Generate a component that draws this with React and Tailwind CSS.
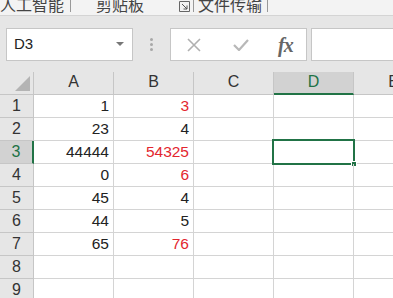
import React from 'react'

const rows = [
  ['1', '1', '3', true],
  ['2', '23', '4', false],
  ['3', '44444', '54325', true],
  ['4', '0', '6', true],
  ['5', '45', '4', false],
  ['6', '44', '5', false],
  ['7', '65', '76', true],
  ['8', '', '', false],
  ['9', '', '', false],
]

const cols = ['A', 'B', 'C', 'D', 'E']

function Launcher() {
  return (
    <svg width="11" height="11" viewBox="0 0 11 11" className="mt-[1px]">
      <path d="M0.5 0.5 H10.5 V10.5 H0.5 Z" fill="none" stroke="#666" strokeWidth="1" />
      <path d="M3 3 L8 8 M8 4.5 V8 H4.5" fill="none" stroke="#555" strokeWidth="1" />
    </svg>
  )
}

export default function App() {
  return (
    <div className="w-[393px] h-[298px] overflow-hidden bg-[#e6e6e6] font-['Liberation_Sans','Noto_Sans_CJK_SC',sans-serif]">
      {/* ribbon strip */}
      <div className="h-[16px] bg-[#f3f3f3] border-b border-[#d4d4d4] overflow-hidden flex items-start text-[16px] leading-[16px] text-[#444] font-['Noto_Sans_CJK_SC',sans-serif]">
        <span className="-mt-[4px] whitespace-nowrap">人工智能</span>
        <span className="ml-[6px] w-px h-[12px] bg-[#999]"></span>
        <span className="ml-[25px] -mt-[4px] whitespace-nowrap">剪贴板</span>
        <span className="ml-[35px]"><Launcher /></span>
        <span className="ml-[3px] w-px h-[12px] bg-[#999]"></span>
        <span className="ml-[4px] -mt-[4px] whitespace-nowrap">文件传输</span>
        <span className="ml-[5px] w-px h-[12px] bg-[#999]"></span>
      </div>

      {/* formula bar */}
      <div className="h-[56px] pt-[12px] flex items-start">
        <div className="ml-[6px] w-[127px] h-[33px] bg-white border border-[#c6c6c6] flex items-center pl-[7px] pr-[8px]">
          <span className="text-[15px] text-[#222] flex-1">D3</span>
          <svg width="8" height="5" viewBox="0 0 8 5"><path d="M0 0 H8 L4 4 Z" fill="#777" /></svg>
        </div>
        <div className="ml-[17px] w-[3px] h-[33px] flex flex-col items-center justify-center gap-[2px]">
          <span className="w-[3px] h-[3px] rounded-full bg-[#a8a8a8]"></span>
          <span className="w-[3px] h-[3px] rounded-full bg-[#a8a8a8]"></span>
          <span className="w-[3px] h-[3px] rounded-full bg-[#a8a8a8]"></span>
        </div>
        <div className="ml-[17px] w-[137px] h-[33px] bg-white border border-[#c6c6c6] flex items-center">
          <svg width="14" height="14" viewBox="0 0 14 14" className="ml-[16px]">
            <path d="M1 1 L13 13 M13 1 L1 13" stroke="#b0b0b0" strokeWidth="1.6" />
          </svg>
          <svg width="16" height="12" viewBox="0 0 16 12" className="ml-[32px]">
            <path d="M1 6 L6 11 L15 1" fill="none" stroke="#b8b8b8" strokeWidth="2.2" />
          </svg>
          <span className="ml-[29px] text-[20px] leading-[20px] italic font-bold text-[#666] font-['Liberation_Serif',serif] tracking-[-1px]">fx</span>
        </div>
        <div className="ml-[4px] flex-1 h-[33px] bg-white border border-[#c6c6c6] border-r-0"></div>
      </div>

      {/* sheet grid */}
      <div className="grid grid-cols-[34px_80px_80px_80px_80px_80px] bg-white">
        <div className="h-[23px] bg-[#e6e6e6] border-r border-b border-[#c6c6c6] flex items-end justify-end pr-[3px] pb-[3px]">
          <svg width="15" height="15" viewBox="0 0 15 15"><path d="M15 0 V15 H0 Z" fill="#b4b4b4" /></svg>
        </div>
        {cols.map((c) => (
          <div
            key={c}
            className={
              c === 'D'
                ? 'h-[23px] bg-[#d2d2d2] border-r border-[#c6c6c6] border-b-2 border-b-[#217346] flex items-end justify-center pb-[2px] text-[16px] leading-[18px] text-[#217346]'
                : 'h-[23px] bg-[#e6e6e6] border-r border-b border-[#c6c6c6] flex items-end justify-center pb-[3px] text-[16px] leading-[18px] text-[#333]'
            }
          >
            {c}
          </div>
        ))}

        {rows.map(([n, a, b, red]) => (
          <React.Fragment key={n}>
            <div
              className={
                n === '3'
                  ? 'h-[23px] bg-[#d2d2d2] border-r-2 border-r-[#217346] border-b border-[#c6c6c6] flex items-end justify-center pb-[2px] text-[16px] leading-[18px] text-[#217346]'
                  : 'h-[23px] bg-[#e6e6e6] border-r border-b border-[#c6c6c6] flex items-end justify-center pb-[2px] text-[16px] leading-[18px] text-[#333]'
              }
            >
              {n}
            </div>
            <div className="h-[23px] border-r border-b border-[#d4d4d4] flex items-end justify-end pr-[4px] pb-[2px] text-[15.5px] leading-[18px] text-[#222]">
              {a}
            </div>
            <div className={'h-[23px] border-r border-b border-[#d4d4d4] flex items-end justify-end pr-[4px] pb-[2px] text-[15.5px] leading-[18px] ' + (red ? 'text-[#e3262f]' : 'text-[#222]')}>
              {b}
            </div>
            <div className="h-[23px] border-r border-b border-[#d4d4d4]"></div>
            <div className="relative h-[23px] border-r border-b border-[#d4d4d4]">
              {n === '3' && (
                <div className="absolute -left-[2px] -top-[2px] w-[83px] h-[26px] border-2 border-[#217346]">
                  <span className="absolute -right-[4px] -bottom-[4px] w-[6px] h-[6px] bg-[#217346] border border-white"></span>
                </div>
              )}
            </div>
            <div className="h-[23px] border-b border-[#d4d4d4]"></div>
          </React.Fragment>
        ))}
      </div>
    </div>
  )
}
